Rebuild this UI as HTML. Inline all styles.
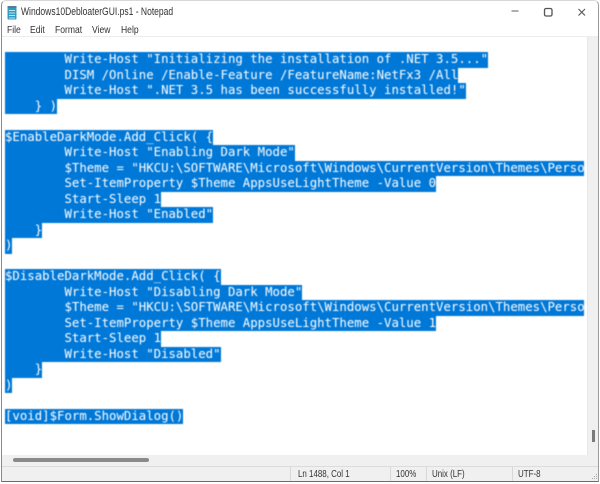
<!DOCTYPE html>
<html><head><meta charset="utf-8"><style>
html,body{margin:0;padding:0;width:600px;height:484px;overflow:hidden;background:#fff}
.a{position:absolute}
#win{position:absolute;left:1px;top:0;width:598px;height:482px;background:#fff;border-left:1px solid #8a8a8a;border-right:1px solid #9a9a9a;border-bottom:1px solid #6e6e6e;border-top:1px solid #d8d8d8;box-sizing:border-box;border-radius:5px 5px 0 0}
.t{font-family:"Liberation Sans",sans-serif;color:#333;white-space:pre;position:absolute;font-size:10.2px;line-height:14px;filter:blur(.3px);transform-origin:0 50%}
.m{transform:scaleX(.84)}
.s{transform:scaleX(.78)}
#ed{position:absolute;left:0;top:0;width:584px;height:484px;overflow:hidden;filter:blur(.4px)}
.r{position:absolute;left:5px;height:15.5px;line-height:15.5px;font-family:"DejaVu Sans Mono",monospace;font-size:12.35px;color:#fff;background:#0078d7;white-space:pre}
</style></head><body>
<div id="win"></div>
<svg class="a" style="left:7px;top:6px" width="11" height="14" viewBox="0 0 11 14"><rect x="0.5" y="0.5" width="9" height="13" rx="1" fill="#2f9cc4"/><rect x="0.5" y="0" width="9" height="2" fill="#5a7f8a"/><path d="M2 4.5h6M2 7h6M2 9.5h6M2 12h6" stroke="#bfe4f0" stroke-width="1"/></svg>
<div class="t" style="left:21px;top:5px;font-size:10.6px;transform:scaleX(.805)">Windows10DebloaterGUI.ps1 - Notepad</div>
<div class="t m" style="left:6.5px;top:23.5px">File</div>
<div class="t m" style="left:30px;top:23.5px">Edit</div>
<div class="t m" style="left:55px;top:23.5px">Format</div>
<div class="t m" style="left:92px;top:23.5px">View</div>
<div class="t m" style="left:121px;top:23.5px">Help</div>
<div class="a" style="left:2px;top:36px;width:596px;height:1px;background:#ededed"></div>
<svg class="a" style="left:500px;top:2px" width="95" height="20" viewBox="0 0 95 20"><path d="M11.5 9h7" stroke="#777" stroke-width="1.2"/><rect x="44.5" y="6.5" width="7.5" height="7.5" rx="1.5" fill="none" stroke="#555" stroke-width="1.3"/><path d="M78.5 7l6.5 6.5M85 7l-6.5 6.5" stroke="#555" stroke-width="1.1"/></svg>
<div id="ed">
<div class="r" style="top:52px">        Write-Host "Initializing the installation of .NET 3.5..."</div>
<div class="r" style="top:67.5px">        DISM /Online /Enable-Feature /FeatureName:NetFx3 /All</div>
<div class="r" style="top:83px">        Write-Host ".NET 3.5 has been successfully installed!"</div>
<div class="r" style="top:98.5px">    } )</div>
<div class="r" style="top:129.5px">$EnableDarkMode.Add_Click( {</div>
<div class="r" style="top:145px">        Write-Host "Enabling Dark Mode"</div>
<div class="r" style="top:160.5px">        $Theme = "HKCU:\SOFTWARE\Microsoft\Windows\CurrentVersion\Themes\Personalize"</div>
<div class="r" style="top:176px">        Set-ItemProperty $Theme AppsUseLightTheme -Value 0</div>
<div class="r" style="top:191.5px">        Start-Sleep 1</div>
<div class="r" style="top:207px">        Write-Host "Enabled"</div>
<div class="r" style="top:222.5px">    }</div>
<div class="r" style="top:238px">)</div>
<div class="r" style="top:269px">$DisableDarkMode.Add_Click( {</div>
<div class="r" style="top:284.5px">        Write-Host "Disabling Dark Mode"</div>
<div class="r" style="top:300px">        $Theme = "HKCU:\SOFTWARE\Microsoft\Windows\CurrentVersion\Themes\Personalize"</div>
<div class="r" style="top:315.5px">        Set-ItemProperty $Theme AppsUseLightTheme -Value 1</div>
<div class="r" style="top:331px">        Start-Sleep 1</div>
<div class="r" style="top:346.5px">        Write-Host "Disabled"</div>
<div class="r" style="top:362px">    }</div>
<div class="r" style="top:377.5px">)</div>
<div class="r" style="top:408.5px">[void]$Form.ShowDialog()</div>
</div>
<div class="a" style="left:587px;top:37px;width:11px;height:418px;background:#f0f0f0;border-left:1px solid #e8e8e8;box-sizing:border-box"></div>
<div class="a" style="left:592px;top:430px;width:3px;height:12px;background:#7a7a7a"></div>
<div class="a" style="left:2px;top:455px;width:596px;height:11px;background:#f0f0f0"></div>
<div class="a" style="left:13px;top:458px;width:136px;height:4px;background:#8a8a8a;border-radius:2px"></div>
<div class="a" style="left:2px;top:466px;width:596px;height:15px;background:#f0f0f0;border-top:1px solid #dcdcdc;box-sizing:border-box"></div>
<div class="a" style="left:290px;top:467px;width:1px;height:14px;background:#d8d8d8"></div>
<div class="a" style="left:390px;top:467px;width:1px;height:14px;background:#d8d8d8"></div>
<div class="a" style="left:426px;top:467px;width:1px;height:14px;background:#d8d8d8"></div>
<div class="a" style="left:512px;top:467px;width:1px;height:14px;background:#d8d8d8"></div>
<div class="t s" style="left:298px;top:468px">Ln 1488, Col 1</div>
<div class="t s" style="left:396px;top:468px">100%</div>
<div class="t s" style="left:432px;top:468px">Unix (LF)</div>
<div class="t s" style="left:518px;top:468px">UTF-8</div>
<svg class="a" style="left:590px;top:473px" width="8" height="8"><path d="M6 1h1v1H6zM4 3h1v1H4zM6 3h1v1H6zM2 5h1v1H2zM4 5h1v1H4zM6 5h1v1H6z" fill="#a8a8a8"/></svg>
</body></html>
